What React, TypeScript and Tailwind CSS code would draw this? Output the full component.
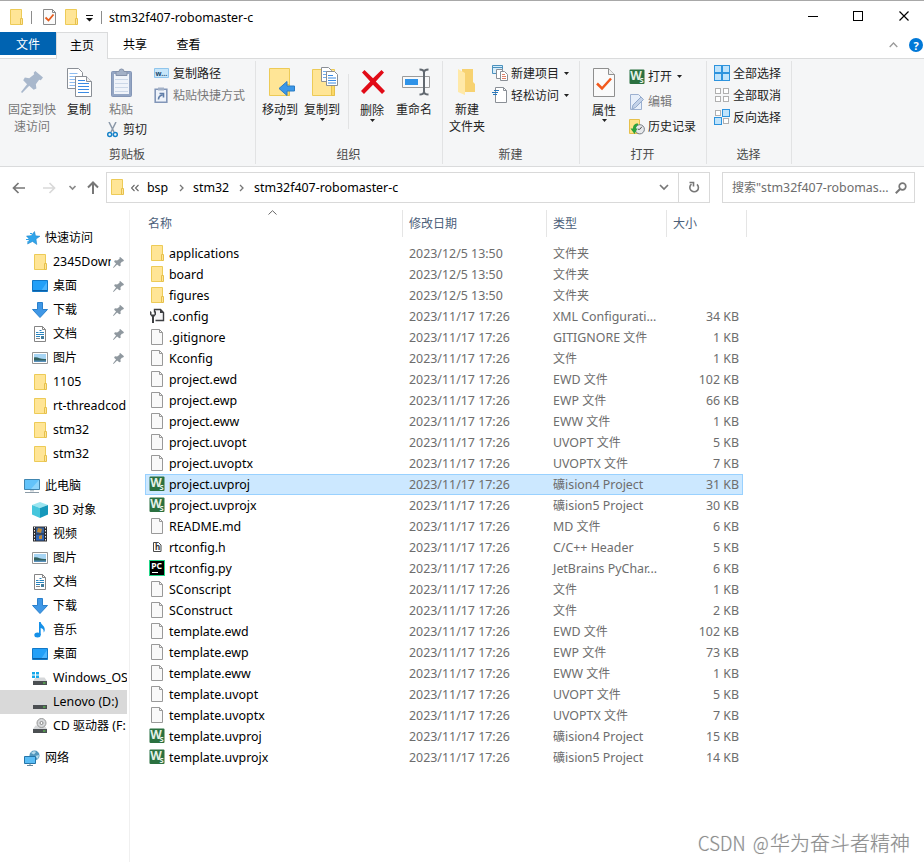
import React from 'react';

type IconName =
  | 'folder' | 'file' | 'config' | 'keil' | 'header' | 'pycharm'
  | 'star' | 'desktop' | 'download' | 'document' | 'picture' | 'pc' | 'cube'
  | 'video' | 'music' | 'osdrive' | 'drive' | 'cd' | 'network';

const files: { name: string; date?: string; type: string; size?: string; icon: IconName; selected?: boolean }[] = [
  { name: 'applications', date: '2023/12/5 13:50', type: '文件夹', icon: 'folder' },
  { name: 'board', date: '2023/12/5 13:50', type: '文件夹', icon: 'folder' },
  { name: 'figures', date: '2023/12/5 13:50', type: '文件夹', icon: 'folder' },
  { name: '.config', type: 'XML Configurati...', size: '34 KB', icon: 'config' },
  { name: '.gitignore', type: 'GITIGNORE 文件', size: '1 KB', icon: 'file' },
  { name: 'Kconfig', type: '文件', size: '1 KB', icon: 'file' },
  { name: 'project.ewd', type: 'EWD 文件', size: '102 KB', icon: 'file' },
  { name: 'project.ewp', type: 'EWP 文件', size: '66 KB', icon: 'file' },
  { name: 'project.eww', type: 'EWW 文件', size: '1 KB', icon: 'file' },
  { name: 'project.uvopt', type: 'UVOPT 文件', size: '5 KB', icon: 'file' },
  { name: 'project.uvoptx', type: 'UVOPTX 文件', size: '7 KB', icon: 'file' },
  { name: 'project.uvproj', type: '礦ision4 Project', size: '31 KB', icon: 'keil', selected: true },
  { name: 'project.uvprojx', type: '礦ision5 Project', size: '30 KB', icon: 'keil' },
  { name: 'README.md', type: 'MD 文件', size: '6 KB', icon: 'file' },
  { name: 'rtconfig.h', type: 'C/C++ Header', size: '5 KB', icon: 'header' },
  { name: 'rtconfig.py', type: 'JetBrains PyChar...', size: '6 KB', icon: 'pycharm' },
  { name: 'SConscript', type: '文件', size: '1 KB', icon: 'file' },
  { name: 'SConstruct', type: '文件', size: '2 KB', icon: 'file' },
  { name: 'template.ewd', type: 'EWD 文件', size: '102 KB', icon: 'file' },
  { name: 'template.ewp', type: 'EWP 文件', size: '73 KB', icon: 'file' },
  { name: 'template.eww', type: 'EWW 文件', size: '1 KB', icon: 'file' },
  { name: 'template.uvopt', type: 'UVOPT 文件', size: '5 KB', icon: 'file' },
  { name: 'template.uvoptx', type: 'UVOPTX 文件', size: '7 KB', icon: 'file' },
  { name: 'template.uvproj', type: '礦ision4 Project', size: '15 KB', icon: 'keil' },
  { name: 'template.uvprojx', type: '礦ision5 Project', size: '14 KB', icon: 'keil' },
];

const quickAccess: { name: string; icon: IconName; pinned?: boolean }[] = [
  { name: '2345Down', icon: 'folder', pinned: true },
  { name: '桌面', icon: 'desktop', pinned: true },
  { name: '下载', icon: 'download', pinned: true },
  { name: '文档', icon: 'document', pinned: true },
  { name: '图片', icon: 'picture', pinned: true },
  { name: '1105', icon: 'folder' },
  { name: 'rt-threadcod', icon: 'folder' },
  { name: 'stm32', icon: 'folder' },
  { name: 'stm32', icon: 'folder' },
];

const thisPc: { name: string; icon: IconName; active?: boolean }[] = [
  { name: '3D 对象', icon: 'cube' },
  { name: '视频', icon: 'video' },
  { name: '图片', icon: 'picture' },
  { name: '文档', icon: 'document' },
  { name: '下载', icon: 'download' },
  { name: '音乐', icon: 'music' },
  { name: '桌面', icon: 'desktop' },
  { name: 'Windows_OS', icon: 'osdrive' },
  { name: 'Lenovo (D:)', icon: 'drive', active: true },
  { name: 'CD 驱动器 (F:', icon: 'cd' },
];

const App: React.FC = () => (
  <div className="relative flex flex-col w-[924px] h-[862px] overflow-hidden bg-white text-[12px] leading-[17px] text-black font-['Noto_Sans','Noto_Sans_CJK_SC',sans-serif] whitespace-nowrap">
    <TitleBar />
    <TabBar />
    <Ribbon />
    <AddressBar />
    <div className="flex flex-1 min-h-0">
      <Sidebar />
      <FileList />
    </div>
    {/* Watermark */}
    <div className="absolute left-[698px] top-[828px] flex items-center h-[28px] text-[20px] text-[#8e8e8e] font-['Noto_Sans_CJK_SC',sans-serif] font-light [text-shadow:1px_1px_0_#ffffff,0_0_1px_#b0b0b0]">
      <span className="w-[55px]"><span className="inline-block origin-left scale-x-[0.93]">CSDN</span></span>
      <span className="w-[17px]"><span className="inline-block origin-left scale-x-[0.86]">@</span></span>
      <span>华为奋斗者精神</span>
    </div>
  </div>
);

// Latin runs are set slightly larger than the Chinese ones
const T: React.FC<{ text: string }> = ({ text }) => (
  <>
    {text.split(/([\u4e00-\u9fff]+)/).filter(Boolean).map((part, i) => (
      <span key={i} className={/[\u4e00-\u9fff]/.test(part) ? 'text-[12px]' : 'text-[12.4px]'}>{part}</span>
    ))}
  </>
);

const TitleBar = () => (
  <div className="flex items-center h-8 shrink-0 border-t border-[#a8a8a8] pt-px pl-2">
    <Icon name="folder" />
    <div className="w-px h-[13px] bg-[#8c8c8c] ml-[7px] mr-[11px]" />
    <svg className="w-[13px] h-4" viewBox="0 0 13 16" fill="none">
      <path d="M.5.5h9l3 3v12H.5z" fill="#fafafa" stroke="#8a8a8a" />
      <path d="M9.5.5v3h3" stroke="#8a8a8a" />
      <path d="M2.5 8.5l3 3 5-6" stroke="#e55b1c" strokeWidth="1.8" />
    </svg>
    <div className="w-4 ml-[7px]"><Icon name="folder" /></div>
    <svg className="w-[7px] h-[7px] ml-[7px] mt-[2px]" viewBox="0 0 7 7"><path d="M0 0h7v1H0zM0 3h7L3.500 6.500z" fill="#111" /></svg>
    <div className="w-px h-[13px] bg-[#8c8c8c] ml-2 mr-[7px]" />
    <span><T text="stm32f407-robomaster-c" /></span>
    <div className="flex-1" />
    <svg className="w-[116px] h-[30px] shrink-0" viewBox="808 2 116 30" fill="none" stroke="#000" shapeRendering="crispEdges">
      <path d="M808 16.500h10M853.500 11.500h9v9h-9z" />
      <path d="M899.500 11.500l9 9M908.500 11.500l-9 9" shapeRendering="auto" strokeWidth="1.200" />
    </svg>
  </div>
);

const TabBar = () => (
  <div className="flex h-[27px] shrink-0 border-b border-[#dadbdc]">
    <div className="flex items-center justify-center w-14 h-[23px] bg-[#0063b1] text-white pt-px">文件</div>
    <div className="flex items-center justify-center w-[52px] h-[27px] bg-[#f5f6f7] border border-b-0 border-[#dadbdc] pb-[2px]">主页</div>
    <div className="flex items-center justify-center w-[54px] h-[25px]">共享</div>
    <div className="flex items-center justify-center w-[53px] h-[25px]">查看</div>
    <div className="flex-1" />
    <div className="flex items-center h-[26px] gap-[11px]">
      <svg className="w-[9px] h-[6px]" viewBox="0 0 9 6" fill="none"><path d="M.7 5l3.800-4 3.800 4" stroke="#9a9a9a" strokeWidth="1.300" /></svg>
      <div className="flex items-center justify-center w-[14px] h-[14px] rounded-full bg-[#0078d7] text-white text-[11px] font-bold mr-[1px]">?</div>
    </div>
  </div>
);

const Group: React.FC<{ label: string; width: string; children: React.ReactNode }> = ({ label, width, children }) => (
  <div className={`${width} flex flex-col h-[103px] mt-[2px] shrink-0 border-r border-[#e2e3e4]`}>
    <div className="flex flex-1 -mt-[2px]">{children}</div>
    <div className="text-center text-[#4a4a4a] h-[17px] mb-[1px] pr-px">{label}</div>
  </div>
);

const Big: React.FC<{ icon: React.ReactNode; lines: string[]; width: string; gap?: string; muted?: boolean; arrow?: boolean }> = ({ icon, lines, width, gap = 'mb-1', muted, arrow }) => (
  <div className={`${width} flex flex-col items-center pt-2 shrink-0 ${muted ? 'text-[#777777]' : 'text-[#222222]'}`}>
    <div className={`${gap} flex items-center justify-center h-[30px]`}>{icon}</div>
    {lines.map((line) => <div key={line}>{line}</div>)}
    {arrow && <Arrow />}
  </div>
);

const Small: React.FC<{ icon: React.ReactNode; text: string; height?: string; muted?: boolean; arrow?: boolean }> = ({ icon, text, height = 'h-[22px]', muted, arrow }) => (
  <div className={`${height} flex items-center ${muted ? 'text-[#777777]' : 'text-[#222222]'}`}>
    <div className="w-[19px] flex items-center shrink-0">{icon}</div>
    <span>{text}</span>
    {arrow && <span className="ml-[5px]"><Arrow /></span>}
  </div>
);

const Arrow = () => <svg className="w-[5px] h-[3px] shrink-0" viewBox="0 0 5 3"><path d="M0 0h5L2.500 3z" fill="#222" /></svg>;

const Ribbon = () => (
  <div className="flex h-[108px] shrink-0 bg-[#f5f6f7] border-b border-[#dadbdc]">
    <Group label="剪贴板" width="w-[256px]">
      <Big width="w-16" icon={<PinIcon className="w-[22px] h-[22px] text-[#a9b8cc]" />} lines={['固定到快', '速访问']} muted />
      <Big width="w-[30px]" icon={<CopyIcon />} lines={['复制']} />
      <div className="w-[54px] shrink-0 flex flex-col">
        <Big width="w-[54px]" icon={<PasteIcon />} lines={['粘贴']} muted />
        <div className="flex items-center mt-[3px] ml-[13px] gap-[5px] text-[#222222]">
          <svg className="w-[11px] h-4" viewBox="0 0 11 16" fill="none">
            <path d="M2 0l5 10M9 0L4 10" stroke="#8b98a8" strokeWidth="1.500" />
            <circle cx="2.700" cy="12.500" r="2" stroke="#1581c8" strokeWidth="1.500" />
            <circle cx="8.300" cy="12.500" r="2" stroke="#1581c8" strokeWidth="1.500" />
          </svg>
          <span>剪切</span>
        </div>
      </div>
      <div className="pl-[6px] pt-[3px]">
        <Small icon={<PathIcon />} text="复制路径" />
        <Small icon={<PasteLinkIcon />} text="粘贴快捷方式" muted />
      </div>
    </Group>

    <Group label="组织" width="w-[187px]">
      <div className="w-[3px]" />
      <Big width="w-[42px]" icon={<MoveToIcon />} lines={['移动到']} arrow />
      <Big width="w-[42px]" icon={<CopyToIcon />} lines={['复制到']} arrow />
      <div className="w-px h-[55px] mt-[15px] ml-[5px] mr-1 bg-[#e2e3e4]" />
      <Big
        width="w-[38px]"
        gap="mb-[5px]"
        icon={<svg className="w-[26px] h-[26px] ml-[2px]" viewBox="0 0 26 26"><path d="M2 3.500L4.500 1 13 9.300 21.500 1 24 3.500 15.800 12.500 25 22 22 25 13 15.800 4 25 1 22 10.200 12.500z" fill="#e10b17" /></svg>}
        lines={['删除']}
        arrow
      />
      <Big width="w-[46px]" icon={<RenameIcon />} lines={['重命名']} />
    </Group>

    <Group label="新建" width="w-[137px]">
      <Big width="w-12" icon={<NewFolderIcon />} lines={['新建', '文件夹']} />
      <div className="pt-[3px] pl-[1px]">
        <Small icon={<NewItemIcon />} text="新建项目" arrow />
        <Small icon={<EasyAccessIcon />} text="轻松访问" arrow />
      </div>
    </Group>

    <Group label="打开" width="w-[127px]">
      <Big width="w-12" gap="mb-[5px]" icon={<PropertiesIcon />} lines={['属性']} arrow />
      <div className="pt-[5px] pl-[1px]">
        <Small height="h-[25px]" icon={<Icon name="keil" />} text="打开" arrow />
        <Small height="h-[25px]" icon={<EditIcon />} text="编辑" muted />
        <Small height="h-[25px]" icon={<HistoryIcon />} text="历史记录" />
      </div>
    </Group>

    <Group label="选择" width="w-[85px]">
      <div className="pt-[3px] pl-[7px]">
        <Small icon={<SelectIcon cells={[1, 1, 1, 1]} />} text="全部选择" />
        <Small icon={<SelectIcon cells={[0, 0, 0, 0]} />} text="全部取消" />
        <Small icon={<SelectIcon cells={[0, 1, 1, 0]} />} text="反向选择" />
      </div>
    </Group>
  </div>
);

const AddressBar = () => (
  <div className="flex items-start h-[43px] shrink-0 pt-[5px]">
    <svg className="w-[106px] h-[31px] shrink-0" viewBox="0 172 106 31" fill="none" strokeWidth="1.700">
      <path d="M25 188H14M18.500 183l-5 5 5 5" stroke="#777" />
      <path d="M43 188h11M49.500 183l5 5-5 5" stroke="#d9d9d9" />
      <path d="M69.500 186l3 3 3-3" stroke="#8a8a8a" />
      <path d="M93 194v-11M88 187.500l5-5 5 5" stroke="#777" strokeWidth="2" />
    </svg>
    <div className="flex w-[604px] h-[31px] border border-[#d9d9d9] items-center">
      <div className="ml-[2px] mb-px w-[22px]"><Icon name="folder" /></div>
      <svg className="w-[8px] h-[8px] mr-[8px]" viewBox="0 0 8 8" fill="none" stroke="#666" strokeWidth="1.100"><path d="M3.500 1l-3 3 3 3M7.500 1l-3 3 3 3" /></svg>
      <span className="w-[32px]"><T text="bsp" /></span>
      <Crumb />
      <span className="w-[46px] ml-[1px]"><T text="stm32" /></span>
      <Crumb />
      <span className="ml-[2px]"><T text="stm32f407-robomaster-c" /></span>
      <div className="flex-1" />
      <svg className="w-[10px] h-[7px] mr-[9px]" viewBox="0 0 10 7" fill="none"><path d="M1 1l4 4 4-4" stroke="#777" strokeWidth="1.700" /></svg>
      <div className="w-[31px] h-full border-l border-[#d9d9d9] flex items-center justify-center">
        <svg className="w-[12px] h-[13px]" viewBox="0 0 12 13" fill="none"><path d="M9 3.300A4.300 4.300 0 1 1 3.500 3.100M1.500 1.500h4v4" stroke="#777" strokeWidth="1.600" /></svg>
      </div>
    </div>
    <div className="flex items-center w-[193px] h-[31px] ml-3 pl-[9px] border border-[#d9d9d9] text-[#6d6d6d]">
      <span><T text={'搜索"stm32f407-robomas...'} /></span>
      <div className="flex-1" />
      <svg className="w-[12px] h-[12px] mr-[7px]" viewBox="0 0 12 12" fill="none" stroke="#777"><circle cx="7.500" cy="4.500" r="3.300" strokeWidth="1.700" /><path d="M5 7L.8 11.200" strokeWidth="2" /></svg>
    </div>
  </div>
);

const Crumb = () => <svg className="w-[5px] h-[8px] mr-[8px]" viewBox="0 0 5 8" fill="none"><path d="M1 1l3 3-3 3" stroke="#777" strokeWidth="1.300" /></svg>;

const Sidebar = () => (
  <div className="w-[130px] shrink-0 border-r border-[#f0f0f0] pt-4">
    <SideRow icon="star" name="快速访问" root />
    {quickAccess.map((item, i) => <SideRow key={i} {...item} />)}
    <div className="h-2" />
    <SideRow icon="pc" name="此电脑" root />
    {thisPc.map((item) => <SideRow key={item.name} {...item} />)}
    <div className="h-2" />
    <SideRow icon="network" name="网络" root />
  </div>
);

const SideRow: React.FC<{ icon: IconName; name: string; root?: boolean; pinned?: boolean; active?: boolean }> = ({ icon, name, root, pinned, active }) => (
  <div className={`${root ? 'pl-6' : 'pl-8'} ${active ? 'bg-[#d9d9d9]' : ''} flex items-center w-[127px] h-6 overflow-hidden`}>
    <Icon name={icon} />
    <span className={`${pinned ? 'w-[58px] overflow-hidden' : ''} ml-[5px] pb-px`}><T text={name} /></span>
    {pinned && <PinIcon className="w-[11px] h-[11px] ml-[2px] text-[#8f989f] shrink-0" />}
  </div>
);

const FileList = () => (
  <div className="flex-1 flex flex-col">
    <div className="relative flex h-[27px] text-[#4c607a]">
      <div className="w-[273px] pl-[18px] pt-[5px] border-r border-[#e5e5e5]">名称</div>
      <div className="w-[144px] pl-[6px] pt-[5px] border-r border-[#e5e5e5]">修改日期</div>
      <div className="w-[120px] pl-[6px] pt-[5px] border-r border-[#e5e5e5]">类型</div>
      <div className="w-[80px] pl-[6px] pt-[5px] border-r border-[#e5e5e5]">大小</div>
      <svg className="absolute left-[138px] top-0 w-[9px] h-[5px]" viewBox="0 0 9 5" fill="none"><path d="M.5 4.500l4-3.800 4 3.800" stroke="#666" /></svg>
    </div>
    <div className="pt-[6px] pl-[15px]">
      {files.map((file) => (
        <div
          key={file.name}
          className={`flex items-center w-[598px] h-[21px] pl-[4px] ${file.selected ? 'bg-[#cce8ff] outline outline-1 -outline-offset-1 outline-[#99d1ff]' : ''}`}
        >
          <div className="mb-px"><Icon name={file.icon} /></div>
          <span className="w-[244px] pl-1 shrink-0"><T text={file.name} /></span>
          <span className="w-[144px] text-[#6d6d6d] shrink-0"><T text={file.date || '2023/11/17 17:26'} /></span>
          <span className="w-[116px] text-[#6d6d6d] shrink-0"><T text={file.type} /></span>
          <span className="w-[70px] text-right text-[#6d6d6d] shrink-0"><T text={file.size || ''} /></span>
        </div>
      ))}
    </div>
  </div>
);

const PinIcon: React.FC<{ className: string }> = ({ className }) => (
  <svg className={className} viewBox="0 0 20 20" fill="currentColor"><path d="M13 0l7 6-2 2.500-1.500-.5-3 4 .5 4-2.500 1-4-3.500L1 20l-1-1 5.500-7L2 8.500 3.500 6l4 .5 4.500-3.500-.5-1.500z" /></svg>
);

const CopyIcon = () => (
  <svg className="w-[25px] h-[29px]" viewBox="0 0 25 29" fill="none">
    <path d="M.5.5h11l4 4v16H.5z" fill="#fff" stroke="#8a8f96" />
    <path d="M2.500 5.500h8M2.500 8.500h10M2.500 11.500h10M2.500 14.500h10M2.500 17.500h10" stroke="#8ebcf0" />
    <path d="M8.500 8.500h11l5 5v15h-16z" fill="#fff" stroke="#8a8f96" />
    <path d="M19.500 8.500v5h5" fill="#eee" stroke="#8a8f96" />
    <path d="M11 12.500h7M11 15.500h11M11 18.500h11M11 21.500h11M11 24.500h11" stroke="#3a8be4" />
  </svg>
);

const PasteIcon = () => (
  <svg className="w-[21px] h-[29px]" viewBox="0 0 21 29" fill="none">
    <rect x=".5" y="3.500" width="20" height="25" rx="1" fill="#94a6c4" stroke="#8496b6" />
    <path d="M3 6h15v20H3z" fill="#f0f4fa" />
    <path d="M4 11.500h13M4 15.500h13M4 19.500h13M4 23.500h13" stroke="#ccd8e8" />
    <path d="M5 3.500h3a2.500 2.500 0 0 1 5 0h3v4H5z" fill="#a3b1c7" stroke="#8592aa" />
  </svg>
);

const PathIcon = () => (
  <svg className="w-[15px] h-[10px]" viewBox="0 0 15 10" fill="none">
    <path d="M.5.500h14v9H.500z" fill="#c7e6fa" stroke="#8fc5ec" />
    <text x="1.500" y="7.500" fill="#17456b" fontSize="7" fontWeight="700" fontFamily="Noto Sans, sans-serif">w...</text>
  </svg>
);

const PasteLinkIcon = () => (
  <svg className="w-[14px] h-4" viewBox="0 0 14 16" fill="none">
    <path d="M1.200 2.200h11.600v13H1.200z" fill="#eef3fa" stroke="#8296b8" strokeWidth="1.600" />
    <path d="M4 .500h6v3H4z" fill="#a3b1c7" />
    <path d="M4.500 12.500c0-3 1-4 4-4.500M5.500 6.500h4v4" stroke="#5f7da8" strokeWidth="1.600" />
  </svg>
);

const MoveToIcon = () => (
  <svg className="w-[28px] h-[30px] ml-[4px]" viewBox="0 0 28 30" fill="none">
    <path d="M1.500 1.500h20v27h-20z" fill="#ffe596" stroke="#edcb57" />
    <path d="M18.500 17.500h3v11h-3z" fill="#fbd866" stroke="#e6c04c" />
    <path d="M11 21.500l8-7v4.500h7.500v5H19v4.500z" fill="#3b97e8" stroke="#2a7cc4" />
  </svg>
);

const CopyToIcon = () => (
  <svg className="w-[28px] h-[32px] ml-[6px]" viewBox="0 0 28 32" fill="none">
    <path d="M1.500 3.500h22v26h-22z" fill="#ffe596" stroke="#edcb57" />
    <path d="M20.500 19.500h3v10h-3z" fill="#fbd866" stroke="#e6c04c" />
    <path d="M10.500 1.500h7l3 3v11h-10z" fill="#fff" stroke="#8a8f96" />
    <path d="M12 5.500h4M12 8.500h4M12 11.500h4" stroke="#72adec" />
    <path d="M15.500 5.500h8l3 3v11h-11z" fill="#fff" stroke="#8a8f96" />
    <path d="M17 9.500h5M17 12h8M17 14.500h8M17 17h8" stroke="#3a8be4" />
  </svg>
);

const RenameIcon = () => (
  <svg className="w-[30px] h-[28px] ml-[3px]" viewBox="0 0 30 28" fill="none">
    <path d="M1.500 8.500h27v11h-27z" fill="#f8f9fa" stroke="#9a9a9a" />
    <path d="M4 11h13v6H4z" fill="#2f93e8" />
    <path d="M18.500 1.500c3 0 4.500 1 4.500 3v19c0 2-1.500 3-4.500 3M27.500 1.500c-3 0-4.500 1-4.500 3M27.500 26.500c-3 0-4.500-1-4.500-3" stroke="#626970" strokeWidth="2" />
  </svg>
);

const NewFolderIcon = () => (
  <svg className="w-[20px] h-[28px]" viewBox="0 0 20 28">
    <path d="M5 1h11v13l2 2v8H5z" fill="#f7d271" />
    <path d="M1 1l7 4v22l-7-3z" fill="#ffe9a8" />
  </svg>
);

const NewItemIcon = () => (
  <svg className="w-4 h-4" viewBox="0 0 16 16" fill="none">
    <path d="M.500.500h10v8H.500z" fill="#d6edfb" stroke="#4b91bd" />
    <path d="M1 2.500h9" stroke="#4b91bd" />
    <path d="M4.500 4.500h6v9h-6z" fill="#fff" stroke="#8a8f96" />
    <path d="M8.500 6.500h4l3 3v6h-7z" fill="#fff" stroke="#8a8f96" />
    <path d="M10 9.500h3M10 11.500h4M10 13.500h4" stroke="#df8068" />
  </svg>
);

const EasyAccessIcon = () => (
  <svg className="w-4 h-4" viewBox="0 0 16 16" fill="none">
    <path d="M3.500.500h8l3 3v12h-11z" fill="#fff" stroke="#8a8f96" />
    <path d="M11.500.500v3h3" stroke="#8a8f96" />
    <path d="M2 3.500h5M0 5.500h6M1 7.500h4" stroke="#2878bd" />
  </svg>
);

const PropertiesIcon = () => (
  <svg className="w-[22px] h-[29px]" viewBox="0 0 22 29" fill="none">
    <path d="M.500.500h15l6 6v22H.500z" fill="#fafafa" stroke="#8f8f8f" />
    <path d="M15.500.500v6h6" fill="#eee" stroke="#8f8f8f" />
    <path d="M4 15.500l5 5 9-10" stroke="#f2591c" strokeWidth="2.500" />
  </svg>
);

const EditIcon = () => (
  <svg className="w-[15px] h-4" viewBox="0 0 15 16" fill="none">
    <path d="M1.500.500h8l3 3v12h-11z" fill="#e7effa" stroke="#9cb0d0" />
    <path d="M3 15l1-4 8-8 2.500 2.500-8 8z" fill="#c3d2e8" stroke="#92a9cb" />
  </svg>
);

const HistoryIcon = () => (
  <svg className="w-4 h-4" viewBox="0 0 16 16" fill="none">
    <path d="M.500.500h10v14H.500z" fill="#ffe389" stroke="#e6c04c" />
    <circle cx="10.800" cy="10.300" r="4.600" fill="#e6e8eb" stroke="#777e86" />
    <path d="M10.800 10.300l2-2.500M10.800 10.300h-2" stroke="#555" />
    <path d="M9 4.500C5.500 4.500 4 6.500 4 9.500H1.500L5.500 15l3-5.500H7c0-1.500.5-3 2-3.500z" fill="#2da23c" />
  </svg>
);

const SelectIcon: React.FC<{ cells: number[] }> = ({ cells }) => (
  <svg className="w-4 h-4" viewBox="0 0 16 16">
    {cells.map((on, i) => {
      const x = (i % 2) * 8;
      const y = Math.floor(i / 2) * 8;
      return on
        ? <rect key={i} x={x + 0.5} y={y + 0.5} width="7" height="7" fill="#bfe3fb" stroke="#2d93dd" />
        : <rect key={i} x={x + 1.5} y={y + 1.5} width="5" height="5" fill="#fff" stroke="#b0b0b0" />;
    })}
  </svg>
);

// 16px shell icons
const Icon: React.FC<{ name: IconName }> = ({ name }) => (
  <svg className="w-4 h-4 shrink-0" viewBox="0 0 16 16" fill="none">{shapes[name]}</svg>
);

const driveBody = (
  <>
    <path d="M3.500 7.500h9L15 11H1z" fill="#d6d8da" />
    <path d="M1 11h14v4H1z" fill="#4b4f52" />
    <path d="M11 12.500h2.500v1H11z" fill="#5ee04e" />
  </>
);

const shapes: Record<IconName, React.ReactNode> = {
  folder: (
    <>
      <path d="M2.500.500h11v15h-11z" fill="#ffe596" stroke="#edcb57" />
      <path d="M12.500 9.500h2v6h-2z" fill="#ffe596" stroke="#e6c04c" />
    </>
  ),
  file: (
    <>
      <path d="M2.500.500h8l3 3v12h-11z" fill="#f9f9f9" stroke="#999999" />
      <path d="M10.500.500v3h3" stroke="#999999" />
    </>
  ),
  config: (
    <>
      <path d="M5.500 4.500v-3h6l3 3v8H6.500" fill="#f4f4f6" stroke="#3d3f42" strokeWidth="1.400" />
      <path d="M11 1v4h4z" fill="#3d3f42" />
      <path d="M1 3v3.500L3 9v6h2V9l2-2.500V3L5.500 4v2.500h-3V4z" fill="#3d3f42" />
    </>
  ),
  keil: (
    <>
      <rect x=".5" y=".5" width="15" height="14.500" rx="1" fill="#2b7140" />
      <text x="1.200" y="10.500" fill="#e4f0e6" fontSize="12" fontWeight="700" fontFamily="Noto Sans, sans-serif" textLength="11.500" lengthAdjust="spacingAndGlyphs">W</text>
      <text x="10.500" y="14.300" fill="#f2f8f3" fontSize="7.500" fontWeight="700" fontFamily="Noto Sans, sans-serif">S</text>
    </>
  ),
  header: (
    <>
      <path d="M4.500 3.500h5l2.500 2.500v6.500H4.500z" fill="#fff" stroke="#4a4a4a" />
      <text x="6" y="11.300" fill="#333" fontSize="8" fontWeight="700" fontFamily="Noto Sans, sans-serif">h</text>
    </>
  ),
  pycharm: (
    <>
      <path d="M0 0h16v16H0z" fill="#21d789" />
      <path d="M1 1h14v14H1z" fill="#000" />
      <text x="2.300" y="9" fill="#fff" fontSize="8.500" fontWeight="700" fontFamily="Noto Sans, sans-serif">PC</text>
      <path d="M3 12h6v1H3z" fill="#fff" />
    </>
  ),
  star: (
    <>
      <path d="M10.500 1.500l1 4.300 4.500.4-4 2.800.8 5.500-4.300-3-5 2.500 2-4.500L2.500 6l4.500-.3z" fill="#2fa4ea" stroke="#1b7fc4" strokeWidth=".5" />
      <path d="M2 9.500h3M3 12h2M6 3.500h2" stroke="#2fa4ea" />
    </>
  ),
  desktop: (
    <>
      <path d="M.500 2.500h15v11H.500z" fill="#23a0f8" stroke="#1278c7" />
      <path d="M9 13l6-9v9z" fill="#4cb6ff" />
      <path d="M1 12.500h14" stroke="#0a5fa5" />
    </>
  ),
  download: <path d="M5.500.500h5v7h5L8 15.500.500 7.500h5z" fill="#3f97e6" stroke="#2a80cc" />,
  document: (
    <>
      <path d="M2.500.500h8l3 3v12h-11z" fill="#fff" stroke="#858585" />
      <path d="M10.500.500v3h3" stroke="#858585" />
      <path d="M4 6.500h2.500M7.500 4.500h2M7.500 6.500h4.500M4 8.500h8M4 10.500h4" stroke="#2883bd" />
      <path d="M4 12.500h4" stroke="#858585" />
      <path d="M9 10h3v3H9z" fill="#417c9c" />
    </>
  ),
  picture: (
    <>
      <path d="M.500 2.500h15v11H.500z" fill="#fff" stroke="#959595" />
      <path d="M2 4h12v8H2z" fill="#a7d5f4" />
      <path d="M2 7.500c4-1 6 2 12 1.500v3H2z" fill="#32605e" />
      <path d="M2 10.500h12V12H2z" fill="#5a92bd" />
    </>
  ),
  pc: (
    <>
      <path d="M.500 1.500h15v10H.500z" fill="#63c3fa" stroke="#4086b0" />
      <path d="M7 11l8-9v9z" fill="#8dd5fc" />
      <path d="M6 12h4v1.500H6z" fill="#c3ccd3" />
      <path d="M1 14.500h14" stroke="#8b9ba7" />
    </>
  ),
  cube: (
    <>
      <path d="M8 0l8 3-8 3-8-3z" fill="#9be5f0" />
      <path d="M0 3l8 3v10l-8-3.500z" fill="#46c6dc" />
      <path d="M16 3L8 6v10l8-3.500z" fill="#1598bb" />
    </>
  ),
  video: (
    <>
      <path d="M1 .5h14v15H1z" fill="#2c2c30" />
      <path d="M4 1.500h8v6H4z" fill="#37639e" />
      <path d="M4 8.500h8v6H4z" fill="#2f65b5" />
      <path d="M6 2l4 1-1 4-4-1zM7 10l3-1v4H7z" fill="#c28a35" />
      <path d="M2.500 1v14M13.500 1v14" stroke="#ececec" strokeDasharray="1.500 1.500" />
    </>
  ),
  music: (
    <>
      <ellipse cx="5.500" cy="13" rx="3.200" ry="2.500" fill="#1590e8" />
      <path d="M7 0h1.700c.3 3 4.800 4 4 8.500-.2 1-.7 1.700-1 2 .2-3-1-4-3-4.500v7H7z" fill="#1590e8" />
    </>
  ),
  osdrive: (
    <>
      {driveBody}
      <path d="M0 2h3v2.500H0zM4 2h3v2.500H4zM0 5.500h3V8H0zM4 5.500h3V8H4z" fill="#16a8ea" />
    </>
  ),
  drive: driveBody,
  cd: (
    <>
      <g>{driveBody}</g>
      <circle cx="9.500" cy="5" r="4.500" fill="#d6d8da" stroke="#999" />
      <circle cx="9.500" cy="5" r="1.500" fill="#fff" stroke="#888" />
    </>
  ),
  network: (
    <>
      <circle cx="10.500" cy="5.500" r="5" fill="#5297bd" />
      <path d="M7 3c2-2 4-2 5-1L10 4.500zM11 6l4-1-1 4z" fill="#b5daea" />
      <path d="M.500 6.500h11v7H.500z" fill="#5bbdf5" stroke="#2575a8" />
      <path d="M6 13.500v2M3 15.500h6" stroke="#64869b" />
    </>
  ),
};

export default App;
